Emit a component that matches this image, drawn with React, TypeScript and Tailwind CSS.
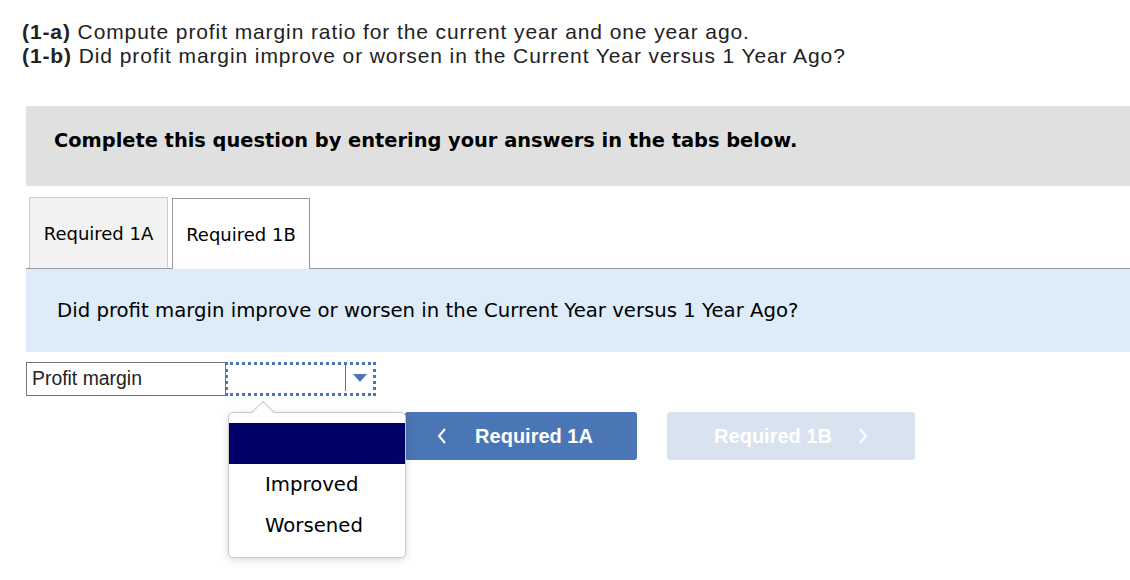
import React from "react";

export default function App() {
  return (
    <div className="w-[1130px] h-[580px] bg-white relative overflow-hidden">
      <p className="pt-[20px] pl-[22px] text-[21px] leading-[24px] tracking-[0.9px] text-[#222]" style={{ fontFamily: "'Liberation Sans', Arial, sans-serif" }}>
        <span className="font-bold">(1-a)</span> Compute profit margin ratio for the current year and one year ago.<br />
        <span className="font-bold">(1-b)</span> Did profit margin improve or worsen in the Current Year versus 1 Year Ago?
      </p>
      <div className="ml-[26px] mt-[38px]" style={{ fontFamily: "'DejaVu Sans', Verdana, sans-serif" }}>
        <div className="h-[80px] bg-[#e0e0e0] flex items-center pl-[28px] pb-[10px]">
          <span className="font-bold text-[19.4px] text-black">Complete this question by entering your answers in the tabs below.</span>
        </div>
        <div className="mt-[12px] flex items-end border-b border-[#999] pl-[3px] gap-[4px] h-[71px]">
          <div className="w-[139px] h-[71px] bg-[#f2f2f2] border border-[#ccc] border-b-0 flex items-center justify-center text-[18px] text-black">Required 1A</div>
          <div className="w-[138px] h-[71px] bg-white border border-[#999] border-b-0 -mb-px flex items-center justify-center text-[18px] text-black">Required 1B</div>
        </div>
        <div className="h-[83px] bg-[#deebf8] flex items-center pl-[31px] text-[19.7px] text-black">
          Did profit margin improve or worsen in the Current Year versus 1 Year Ago?
        </div>
        <div className="mt-[10px] flex">
          <div className="w-[200px] h-[34px] border border-[#777] flex items-center pl-[5px] text-[19.4px] text-[#222]" style={{ fontFamily: "'Liberation Sans', Arial, sans-serif" }}>Profit margin</div>
          <div className="w-[151px] h-[34px] border-[3px] border-dotted border-[#4a76b8] -ml-px flex justify-end">
            <div className="w-[28px] h-[26px] border-l border-[#4a76b8] flex items-center justify-center">
              <svg width="14" height="8" viewBox="0 0 14 8"><path d="M0 0 L14 0 L7 8 Z" fill="#4a76b8" /></svg>
            </div>
          </div>
        </div>
        <div className="mt-[16px] flex pl-[379px] gap-[30px]" style={{ fontFamily: "'Liberation Sans', Arial, sans-serif" }}>
          <div className="w-[232px] h-[48px] rounded-[3px] bg-[#4a76b5] text-white font-bold text-[20px] flex items-center justify-center gap-[28px] pr-[12px]">
            <svg width="10" height="16" viewBox="0 0 10 16"><path d="M8 1 L2 8 L8 15" stroke="white" strokeWidth="2" fill="none" /></svg>
            <span>Required 1A</span>
          </div>
          <div className="w-[248px] h-[48px] rounded-[3px] bg-[#d9e3ef] text-white font-bold text-[20px] flex items-center justify-center gap-[26px]">
            <span>Required 1B</span>
            <svg width="10" height="16" viewBox="0 0 10 16"><path d="M2 1 L8 8 L2 15" stroke="white" strokeWidth="2" fill="none" /></svg>
          </div>
        </div>
      </div>
      {/* dropdown popup */}
      <div className="absolute left-[228px] top-[412px] w-[178px] h-[146px] bg-white border border-[#c8c8c8] rounded-[5px] shadow-[0_2px_8px_rgba(0,0,0,0.15)] pt-[10px]" style={{ fontFamily: "'DejaVu Sans', Verdana, sans-serif" }}>
        <div className="absolute left-[26px] -top-[9px] w-[16px] h-[16px] bg-white border-l border-t border-[#c8c8c8] rotate-45" />
        <div className="relative h-[41px] bg-[#000066]" />
        <div className="h-[41px] flex items-center pl-[36px] text-[19.7px] text-black">Improved</div>
        <div className="h-[42px] flex items-center pl-[36px] text-[19.7px] text-black">Worsened</div>
      </div>
    </div>
  );
}
